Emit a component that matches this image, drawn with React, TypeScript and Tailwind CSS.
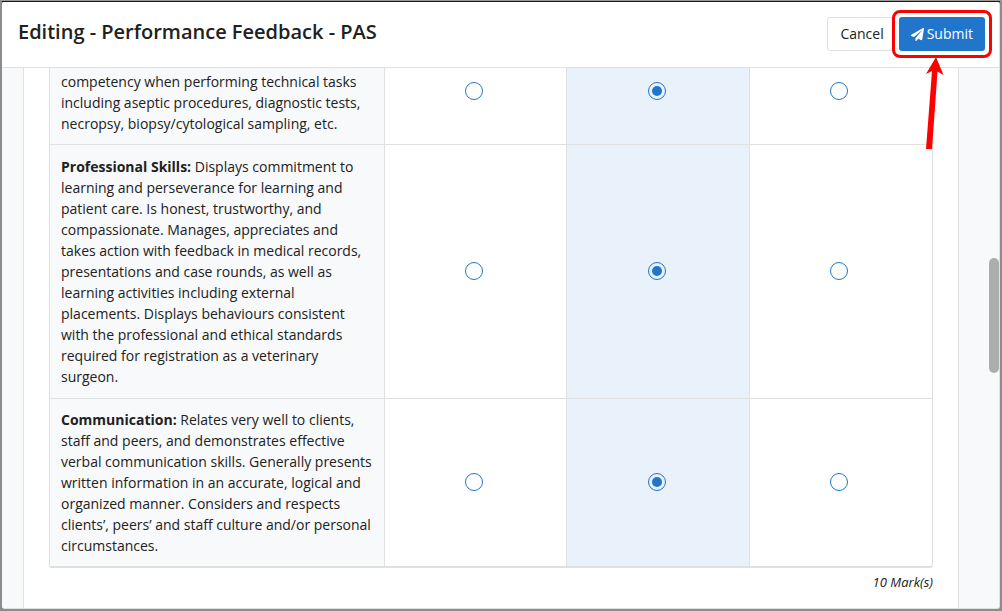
import { FaPaperPlane } from 'react-icons/fa';

type Criterion = {
  id: string;
  title?: string;
  text: string;
  selected: number;
  padding: string;
};

const criteria: Criterion[] = [
  {
    id: 'technical',
    text: 'competency when performing technical tasks including aseptic procedures, diagnostic tests, necropsy, biopsy/cytological sampling, etc.',
    selected: 1,
    padding: 'pt-[33px] pb-2.5',
  },
  {
    id: 'professional',
    title: 'Professional Skills:',
    text: 'Displays commitment to learning and perseverance for learning and patient care. Is honest, trustworthy, and compassionate. Manages, appreciates and takes action with feedback in medical records, presentations and case rounds, as well as learning activities including external placements. Displays behaviours consistent with the professional and ethical standards required for registration as a veterinary surgeon.',
    selected: 1,
    padding: 'py-[11px]',
  },
  {
    id: 'communication',
    title: 'Communication:',
    text: 'Relates very well to clients, staff and peers, and demonstrates effective verbal communication skills. Generally presents written information in an accurate, logical and organized manner. Considers and respects clients’, peers’ and staff culture and/or personal circumstances.',
    selected: 1,
    padding: 'py-2.5',
  },
];

const Header = () => (
  <header className="relative z-10 flex h-[66px] shrink-0 items-start justify-between border-b border-[#dee0e2] bg-white pl-4 pr-3.5 pt-[15px]">
    <h1 className="text-xl font-semibold leading-[30px]">Editing - Performance Feedback - PAS</h1>
    <div className="flex gap-1.5">
      <button
        type="button"
        className="h-[34px] rounded-[3px] border border-[#dee0e2] bg-white pl-3 pr-2 text-sm"
      >
        Cancel
      </button>
      <div className="relative">
        <button
          type="button"
          className="flex h-[34px] items-center gap-[3px] rounded-[3px] bg-[#2176cc] px-3 text-sm font-medium text-white"
        >
          <FaPaperPlane className="h-[13px] w-[13px]" />
          Submit
        </button>
        {/* Callout around the submit button */}
        <div className="pointer-events-none absolute -inset-[7px] rounded-lg border-[3px] border-[#fe0000]" />
        <svg
          className="pointer-events-none absolute left-6 top-10 h-[94px] w-6"
          viewBox="0 0 24 94"
          fill="#fe0000"
        >
          <path d="M13 0 L20.5 18 L14.5 14.5 L9 92 L3 92 L9 14 L3 17 Z" />
        </svg>
      </div>
    </div>
  </header>
);

const RubricTable = () => (
  <table className="-mt-[30px] w-full table-fixed border-separate border-spacing-0 rounded-b-[3px] border-x border-b-2 border-[#dee0e2] text-sm leading-[21px]">
    <colgroup>
      <col className="w-[38%]" />
      <col />
      <col />
      <col />
    </colgroup>
    <tbody>
      {criteria.map((item, row) => {
        const line = row < criteria.length - 1 ? 'border-b' : '';
        return (
          <tr key={item.id}>
            <th
              scope="row"
              className={`border-r border-[#dee0e2] bg-[#f8f9fb] pl-[11px] pr-2 text-left font-normal ${line} ${item.padding}`}
            >
              {item.title && <strong className="font-bold">{item.title} </strong>}
              {item.text}
            </th>
            {[0, 1, 2].map((level) => (
              <td
                key={level}
                className={`border-[#dee0e2] pb-1 pr-[3px] text-center align-middle ${line} ${level < 2 ? 'border-r' : ''} ${
                  item.selected === level ? 'bg-[#e9f1fa]' : ''
                }`}
              >
                <input
                  type="radio"
                  name={item.id}
                  defaultChecked={item.selected === level}
                  aria-label={`${item.id} level ${level + 1}`}
                  className="h-[18px] w-[18px] appearance-none rounded-full border border-[#2176cc] bg-clip-content p-[3px] align-middle checked:bg-[#2176cc]"
                />
              </td>
            ))}
          </tr>
        );
      })}
    </tbody>
  </table>
);

const App = () => {
  return (
    <div className="flex h-screen flex-col overflow-hidden border-t border-[#999999] bg-[#8c8c8c] pb-0.5 pl-0.5 pr-0.5 font-['Open_Sans','Noto_Sans',sans-serif] text-[#212121]">
      <div className="h-px shrink-0 bg-[#1e1230]" />
      <div className="relative flex min-h-0 flex-1 flex-col overflow-hidden rounded-[3px] border-b border-r border-[#dee0e2] bg-white">
        <Header />
        <main className="min-h-0 flex-1 overflow-hidden bg-[#f8f9fb] pl-[21px] pr-10">
          <div className="h-full overflow-hidden border-x border-[#dee0e2] bg-white px-[25px]">
            <RubricTable />
            <p className="mt-1 text-right text-[13px] italic leading-[21px]">10 Mark(s)</p>
          </div>
        </main>
        {/* Scroll thumb */}
        <div className="absolute right-0 top-[42%] mt-px h-[19%] w-2.5 rounded-full bg-[#adadad]" />
      </div>
    </div>
  );
};

export default App;
